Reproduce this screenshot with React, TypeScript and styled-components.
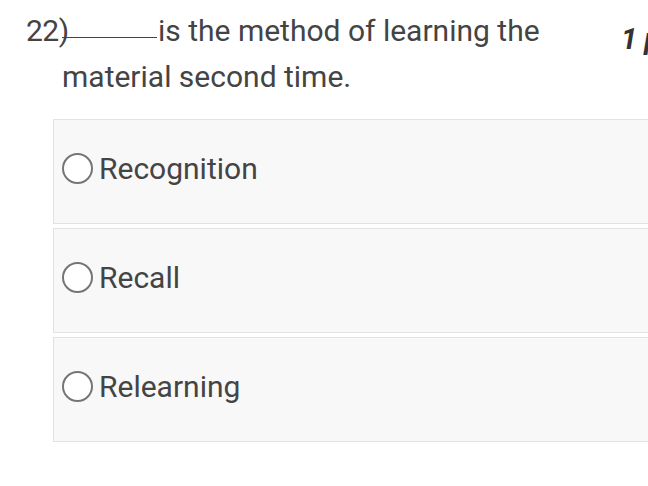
import React from "react";
import styled, { createGlobalStyle } from "styled-components";

const Global = createGlobalStyle`
  html, body { margin: 0; padding: 0; background: #ffffff; overflow: hidden; }
  body { font-family: Roboto, "Liberation Sans", sans-serif; color: #444444; }
`;

const Page = styled.div`
  width: 720px;
  padding: 8px 0 0 26px;
`;

const QuestionRow = styled.div`
  display: flex;
  align-items: flex-start;
`;

const Number = styled.span`
  font-size: 30px;
  line-height: 46px;
  width: 36px;
  flex: none;
  letter-spacing: -0.5px;
`;

const QuestionText = styled.div`
  font-size: 30px;
  line-height: 46px;
  width: 540px;
  flex: none;
`;

const Blank = styled.span`
  display: inline-block;
  width: 95px;
  height: 30px;
  border-bottom: 1.5px solid #444;
  vertical-align: baseline;
  margin-right: 1px;
  transform: translateY(-3px);
`;

const Points = styled.div`
  font-size: 29px;
  line-height: 46px;
  font-weight: 700;
  font-style: italic;
  color: #333;
  margin-left: 19px;
  white-space: nowrap;
  padding-top: 8px;
`;

const Options = styled.div`
  display: flex;
  flex-direction: column;
  gap: 4px;
  margin: 19px 0 0 27px;
  width: 640px;
`;

const Option = styled.label`
  display: flex;
  align-items: center;
  gap: 6px;
  height: 105px;
  box-sizing: border-box;
  padding: 0 0 7px 8px;
  background: #f8f8f8;
  border: 1px solid #e2e2e2;
  font-size: 30px;
  color: #444;
`;

const Radio = styled.span`
  width: 31px;
  height: 31px;
  border-radius: 50%;
  border: 2px solid #757575;
  box-sizing: border-box;
  background: #fff;
  flex: none;
`;

const options = ["Recognition", "Recall", "Relearning"];

export default function App() {
  return (
    <>
      <Global />
      <Page>
        <QuestionRow>
          <Number>22)</Number>
          <QuestionText>
            <Blank />is the method of learning the material second time.
          </QuestionText>
          <Points>1 point</Points>
        </QuestionRow>
        <Options>
          {options.map((o) => (
            <Option key={o}>
              <Radio />
              {o}
            </Option>
          ))}
        </Options>
      </Page>
    </>
  );
}
